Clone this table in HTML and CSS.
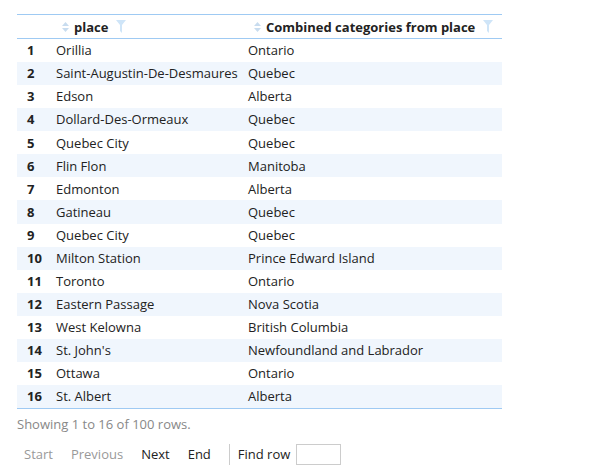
FILE: index.html
```html
<!DOCTYPE html>
<html>
<head>
<meta charset="utf-8">
<link rel="stylesheet" href="styles.css">
</head>
<body>
<div class="wrap">
<table class="grid">
<colgroup><col class="c-num"><col class="c-place"><col class="c-cat"></colgroup>
<thead>
<tr>
<th></th>
<th><span class="hd"><svg class="sort" width="7" height="10" viewBox="0 0 7 10"><path d="M3.5 0L7 4H0z M3.5 10L7 6H0z"/></svg><span class="ht">place</span><svg class="filt" width="10" height="13" viewBox="0 0 10 13"><path d="M0 0H10L6 5V13L4 11V5z"/></svg></span></th>
<th><span class="hd"><svg class="sort" width="7" height="10" viewBox="0 0 7 10"><path d="M3.5 0L7 4H0z M3.5 10L7 6H0z"/></svg><span class="ht">Combined categories from place</span><svg class="filt" width="10" height="13" viewBox="0 0 10 13"><path d="M0 0H10L6 5V13L4 11V5z"/></svg></span></th>
</tr>
</thead>
<tbody>
<tr><td>1</td><td>Orillia</td><td>Ontario</td></tr>
<tr><td>2</td><td>Saint-Augustin-De-Desmaures</td><td>Quebec</td></tr>
<tr><td>3</td><td>Edson</td><td>Alberta</td></tr>
<tr><td>4</td><td>Dollard-Des-Ormeaux</td><td>Quebec</td></tr>
<tr><td>5</td><td>Quebec City</td><td>Quebec</td></tr>
<tr><td>6</td><td>Flin Flon</td><td>Manitoba</td></tr>
<tr><td>7</td><td>Edmonton</td><td>Alberta</td></tr>
<tr><td>8</td><td>Gatineau</td><td>Quebec</td></tr>
<tr><td>9</td><td>Quebec City</td><td>Quebec</td></tr>
<tr><td>10</td><td>Milton Station</td><td>Prince Edward Island</td></tr>
<tr><td>11</td><td>Toronto</td><td>Ontario</td></tr>
<tr><td>12</td><td>Eastern Passage</td><td>Nova Scotia</td></tr>
<tr><td>13</td><td>West Kelowna</td><td>British Columbia</td></tr>
<tr><td>14</td><td>St. John's</td><td>Newfoundland and Labrador</td></tr>
<tr><td>15</td><td>Ottawa</td><td>Ontario</td></tr>
<tr><td>16</td><td>St. Albert</td><td>Alberta</td></tr>
</tbody>
</table>
<div class="info">Showing 1 to 16 of 100 rows.</div>
<div class="pager">
<span class="pl off">Start</span>
<span class="pl off">Previous</span>
<span class="pl">Next</span>
<span class="pl">End</span>
<span class="sep"></span>
<span class="find">Find row</span>
<span class="box"></span>
</div>
</div>
</body>
</html>
```
FILE: styles.css
```css
* { box-sizing: border-box; }
body {
  margin: 0;
  font-family: "Open Sans", "Noto Sans", sans-serif;
  font-size: 13px;
  color: #222;
  background: #fff;
}
.wrap { padding: 14px 0 0 17px; }
.grid {
  width: 485px;
  border-collapse: collapse;
  table-layout: fixed;
  border-top: 1px solid #9fcaf3;
  border-bottom: 1px solid #9fcaf3;
}
.c-num { width: 31px; }
.c-place { width: 192px; }
.c-cat { width: 262px; }
.grid th {
  height: 24px;
  padding: 0 0 0 14px;
  text-align: left;
  font-weight: 700;
  border-bottom: 1px solid #9fcaf3;
  white-space: nowrap;
}
.hd { display: flex; align-items: center; }
.sort { fill: #c8dcef; flex: none; }
.ht { margin-left: 5px; }
.filt { fill: #cfe5f8; margin-left: 8px; flex: none; }
.grid td {
  padding: 2.25px 0 2.25px 8px;
  white-space: nowrap;
  line-height: 18.57px;
}
.grid td:first-child { font-weight: 700; padding-left: 10px; }
.grid tbody tr:nth-child(even) td { background: #f0f6fd; }
.info {
  color: #888;
  margin-top: 6px;
  line-height: 18px;
}
.pager {
  display: flex;
  align-items: center;
  margin-top: 10px;
  padding-left: 7px;
  height: 22px;
}
.pl { margin-right: 18px; color: #222; }
.pl.off { color: #999; }
.sep { width: 1px; height: 21px; background: #ccc; margin-right: 8px; }
.find { margin-right: 6px; }
.box { width: 45px; height: 21px; border: 1px solid #ccc; }
```
